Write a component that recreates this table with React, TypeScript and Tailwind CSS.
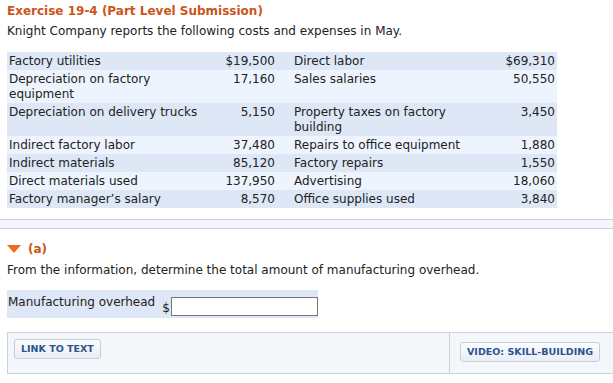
import React from "react";

type Row = {
  a: React.ReactNode;
  av: string;
  b: React.ReactNode;
  bv: string;
};

const rows: Row[] = [
  { a: "Factory utilities", av: "$19,500", b: "Direct labor", bv: "$69,310" },
  {
    a: (
      <>
        Depreciation on factory
        <br />
        equipment
      </>
    ),
    av: "17,160",
    b: "Sales salaries",
    bv: "50,550",
  },
  {
    a: "Depreciation on delivery trucks",
    av: "5,150",
    b: (
      <>
        Property taxes on factory
        <br />
        building
      </>
    ),
    bv: "3,450",
  },
  { a: "Indirect factory labor", av: "37,480", b: "Repairs to office equipment", bv: "1,880" },
  { a: "Indirect materials", av: "85,120", b: "Factory repairs", bv: "1,550" },
  { a: "Direct materials used", av: "137,950", b: "Advertising", bv: "18,060" },
  { a: "Factory manager\u2019s salary", av: "8,570", b: "Office supplies used", bv: "3,840" },
];

const App: React.FC = () => {
  return (
    <div
      className="w-[613px] h-[383px] overflow-hidden bg-white text-[#222] text-[12px]"
      style={{ fontFamily: '"DejaVu Sans", Verdana, sans-serif' }}
    >
      <div className="px-[7px] pt-[3px]">
        <h1 className="text-[12px] leading-[16px] font-bold text-[#cc5418]">
          Exercise 19-4 (Part Level Submission)
        </h1>
        <p className="mt-[5px] leading-[15px]">
          Knight Company reports the following costs and expenses in May.
        </p>

        <div className="mt-[13px] w-[550px]">
          {rows.map((r, i) => (
            <div
              key={i}
              className={`grid grid-cols-[212px_58px_210px_70px] leading-[15px] py-[1.5px] ${
                i % 2 === 0 ? "bg-[#dde7f6]" : "bg-[#edf4fd]"
              }`}
            >
              <div className="pl-[2px] whitespace-nowrap">{r.a}</div>
              <div className="pr-[2px] text-right">{r.av}</div>
              <div className="pl-[17px] whitespace-nowrap">{r.b}</div>
              <div className="pr-[2px] text-right">{r.bv}</div>
            </div>
          ))}
        </div>
      </div>

      <div className="mt-[11px] h-[10px] border-y border-[#c9d3e0] bg-[#f3f6fa]" />

      <div className="px-[7px]">
        <div className="mt-[13px] flex items-center gap-[7px] leading-[14px]">
          <svg width="14" height="8" viewBox="0 0 14 8">
            <polygon points="0,0 14,0 7,8" fill="#f26a1f" />
          </svg>
          <span className="text-[12px] font-bold text-[#cc5418]">(a)</span>
        </div>
        <p className="mt-[7px] leading-[15px]">
          From the information, determine the total amount of manufacturing overhead.
        </p>

        <div className="mt-[12px] w-[311px] h-[28px] bg-[#dde7f6] flex items-start">
          <span className="mt-[5px] pl-[1px] leading-[15px] whitespace-nowrap">
            Manufacturing overhead
          </span>
          <div className="ml-auto flex items-start">
            <span className="mt-[11px] leading-[15px]">$</span>
            <input
              type="text"
              className="ml-[1px] mt-[7px] w-[147px] h-[19px] border border-[#767676] bg-white outline-none"
            />
          </div>
        </div>
      </div>

      <div className="mt-[14px] ml-[7px] flex h-[42px] border-y border-l border-[#c9d3e0] bg-[#f4f7fa]">
        <div className="w-[442px] border-r border-[#c9d3e0] pl-[6px] pt-[6px]">
          <button className="h-[20px] px-[6px] rounded-[3px] border border-[#c5cfdc] bg-gradient-to-b from-[#fbfcfe] to-[#e9eef5] text-[9.5px] font-bold text-[#2d5290] leading-[18px]">
            LINK TO TEXT
          </button>
        </div>
        <div className="flex-1 pl-[10px] pt-[9px]">
          <button className="h-[20px] px-[6px] rounded-[3px] border border-[#c5cfdc] bg-gradient-to-b from-[#fbfcfe] to-[#e9eef5] text-[9.5px] font-bold text-[#2d5290] leading-[18px]">
            VIDEO: SKILL-BUILDING
          </button>
        </div>
      </div>
    </div>
  );
};

export default App;
